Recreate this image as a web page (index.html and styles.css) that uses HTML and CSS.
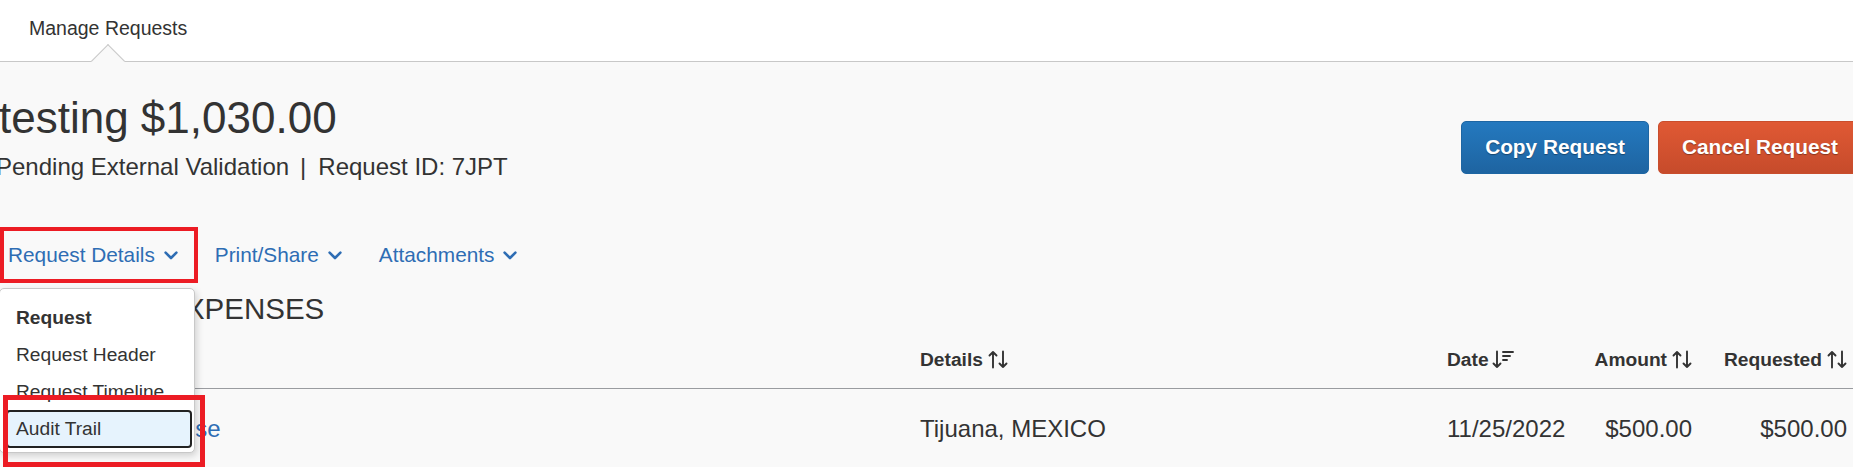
FILE: index.html
```html
<!DOCTYPE html>
<html lang="en">
<head>
<meta charset="utf-8">
<title>Manage Requests</title>
<link rel="stylesheet" href="styles.css">
</head>
<body>
<header class="topbar">
  <nav class="tabs">
    <a class="tab" href="#">Manage Requests</a>
  </nav>
</header>

<main class="page">
  <section class="summary">
    <div class="summary-text">
      <h1 class="title">testing $1,030.00</h1>
      <p class="meta"><span>Pending External Validation</span><span class="sep">|</span><span>Request ID: 7JPT</span></p>
    </div>
    <div class="actions">
      <button class="btn btn-copy" type="button">Copy Request</button>
      <button class="btn btn-cancel" type="button">Cancel Request</button>
    </div>
  </section>

  <nav class="subnav">
    <div class="menu-wrap">
      <a class="subnav-link" href="#">Request Details<svg class="chev" viewBox="0 0 14 9" width="14" height="9"><polyline points="1.6,1.6 7,7 12.4,1.6"/></svg></a>
      <div class="dropdown">
        <div class="dd-head">Request</div>
        <a class="dd-item" href="#">Request Header</a>
        <a class="dd-item" href="#">Request Timeline</a>
        <a class="dd-item dd-active" href="#">Audit Trail</a>
      </div>
      <div class="mark mark-1"></div>
      <div class="mark mark-2"></div>
    </div>
    <a class="subnav-link" href="#">Print/Share<svg class="chev" viewBox="0 0 14 9" width="14" height="9"><polyline points="1.6,1.6 7,7 12.4,1.6"/></svg></a>
    <a class="subnav-link" href="#">Attachments<svg class="chev" viewBox="0 0 14 9" width="14" height="9"><polyline points="1.6,1.6 7,7 12.4,1.6"/></svg></a>
  </nav>

  <section class="expenses">
    <h2 class="section-title">EXPECTED EXPENSES</h2>
    <div class="grid">
      <div class="row row-head">
        <div class="cell"></div>
        <div class="cell">Details<svg class="sort" viewBox="0 0 20 19" width="20" height="19"><path d="M5 17.5V2M1.5 5.5L5 2l3.5 3.5M15 1.5V17M11.5 13.5L15 17l3.5-3.5"/></svg></div>
        <div class="cell date-head">Date<svg class="sort sort-desc" viewBox="0 0 24 19" width="24" height="19"><path d="M6 1.5V17M2.5 13.5L6 17l3.5-3.5M12 2h10M12 6h7M12 10h4"/></svg></div>
        <div class="cell num">Amount<svg class="sort" viewBox="0 0 20 19" width="20" height="19"><path d="M5 17.5V2M1.5 5.5L5 2l3.5 3.5M15 1.5V17M11.5 13.5L15 17l3.5-3.5"/></svg></div>
        <div class="cell num">Requested<svg class="sort" viewBox="0 0 20 19" width="20" height="19"><path d="M5 17.5V2M1.5 5.5L5 2l3.5 3.5M15 1.5V17M11.5 13.5L15 17l3.5-3.5"/></svg></div>
      </div>
      <div class="row row-body">
        <div class="cell first"><a class="exp-link" href="#">Lodging Expense</a></div>
        <div class="cell">Tijuana, MEXICO</div>
        <div class="cell">11/25/2022</div>
        <div class="cell num">$500.00</div>
        <div class="cell num">$500.00</div>
      </div>
    </div>
  </section>
</main>
</body>
</html>
```

FILE: styles.css
```css
html, body {
  margin: 0;
  padding: 0;
  width: 1853px;
  height: 467px;
  overflow: hidden;
  background: #f9f9f9;
  color: #333;
  font-family: "Liberation Sans", Arial, sans-serif;
}

/* ---------- top bar ---------- */
.topbar {
  position: relative;
  z-index: 2;
  height: 61px;
  background: #fff;
  border-bottom: 1px solid #c8c8c8;
}

.tabs {
  display: flex;
  height: 100%;
  padding-left: 29px;
}

.tab {
  position: relative;
  display: block;
  padding-top: 16px;
  font-size: 19.5px;
  line-height: 24px;
  color: #333;
  text-decoration: none;
}

.tab::after {
  content: "";
  position: absolute;
  left: calc(50% - 12px);
  top: 49px;
  width: 24px;
  height: 24px;
  box-sizing: border-box;
  background: #f9f9f9;
  border-top: 1px solid #c8c8c8;
  border-left: 1px solid #c8c8c8;
  transform: rotate(45deg);
}

/* ---------- page ---------- */
.page {
  margin-left: -2px;
}

.summary {
  display: flex;
  justify-content: space-between;
  align-items: flex-start;
  padding-top: 30px;
}

.title {
  margin: 0 0 0 1px;
  font-size: 44px;
  line-height: 52px;
  font-weight: normal;
}

.meta {
  margin: 8px 0 0 -2px;
  font-size: 24px;
  line-height: 30px;
}

.sep {
  margin: 0 12px 0 11px;
}

.actions {
  display: flex;
  gap: 9px;
  margin-top: 29px;
  margin-right: -9px;
}

.btn {
  height: 53px;
  padding: 0 23px;
  border-radius: 5px;
  font-family: "Liberation Sans", Arial, sans-serif;
  font-weight: bold;
  font-size: 20.8px;
  line-height: 1;
  color: #fff;
  text-shadow: 0 1px 1px rgba(0, 0, 0, 0.35);
  cursor: pointer;
}

.btn-copy {
  background: linear-gradient(#2479bf, #1e64a1);
  border: 1px solid #1e66a3;
}

.btn-cancel {
  background: linear-gradient(#e05934, #c64b2b);
  border: 1px solid #c94e2d;
}

/* ---------- sub navigation ---------- */
.subnav {
  display: flex;
  gap: 9px;
  margin-top: 60px;
}

.menu-wrap {
  position: relative;
}

.subnav-link {
  display: block;
  padding: 0 14px 0 10px;
  font-size: 20.8px;
  line-height: 26px;
  color: #2e6db4;
  text-decoration: none;
  white-space: nowrap;
}

.menu-wrap + .subnav-link,
.subnav-link + .subnav-link {
  padding-left: 14px;
}

.chev {
  margin-left: 9px;
  vertical-align: 2px;
  fill: none;
  stroke: #2e6db4;
  stroke-width: 2.6;
  stroke-linecap: round;
  stroke-linejoin: round;
}

/* ---------- dropdown ---------- */
.dropdown {
  position: absolute;
  z-index: 5;
  left: 1px;
  top: 46px;
  width: 196px;
  height: 165px;
  box-sizing: border-box;
  padding-top: 10px;
  background: #fff;
  border: 1px solid #c8c8c8;
  border-radius: 5px;
  box-shadow: 2px 3px 7px rgba(0, 0, 0, 0.16);
}

.dd-head,
.dd-item {
  display: block;
  padding-left: 16px;
  font-size: 19.2px;
  line-height: 37px;
  color: #333;
  text-decoration: none;
  white-space: nowrap;
}

.dd-head {
  font-weight: bold;
}

.dd-active {
  margin: 0 2px 0 6px;
  padding-left: 8px;
  line-height: 34px;
  background: #e6f3fd;
  border: 2px solid #222;
  border-radius: 4px;
}

/* annotation rectangles drawn over the screenshot */
.mark {
  position: absolute;
  z-index: 6;
  box-sizing: border-box;
  border: 4px solid #ec1c24;
  pointer-events: none;
}

.mark-1 {
  left: 2px;
  top: -15px;
  width: 198px;
  height: 56px;
}

.mark-2 {
  left: 5px;
  top: 153px;
  width: 202px;
  height: 72px;
  border-width: 5px;
}

/* ---------- expenses ---------- */
.section-title {
  margin: 23px 0 0;
  font-size: 29.5px;
  line-height: 36px;
  font-weight: normal;
}

.grid {
  margin-top: 21px;
}

.row {
  display: grid;
  grid-template-columns: 922px 527px 93px 152px 155px;
  padding-right: 6px;
}

.row-head {
  font-weight: bold;
  font-size: 19.2px;
  line-height: 24px;
  border-bottom: 1px solid #9a9ca0;
}

.row-head .cell {
  padding-bottom: 16px;
  white-space: nowrap;
}

.row-body {
  font-size: 24px;
  line-height: 30px;
}

.row-body .cell {
  padding-top: 25px;
  white-space: nowrap;
}

.num {
  text-align: right;
}

.first {
  padding-left: 37px;
}

.exp-link {
  color: #2e6db4;
  text-decoration: none;
}

.sort {
  margin-left: 5px;
  vertical-align: -3px;
  fill: none;
  stroke: #333;
  stroke-width: 1.9;
  stroke-linecap: round;
  stroke-linejoin: round;
}

.sort-desc {
  margin-left: 2px;
}
```
